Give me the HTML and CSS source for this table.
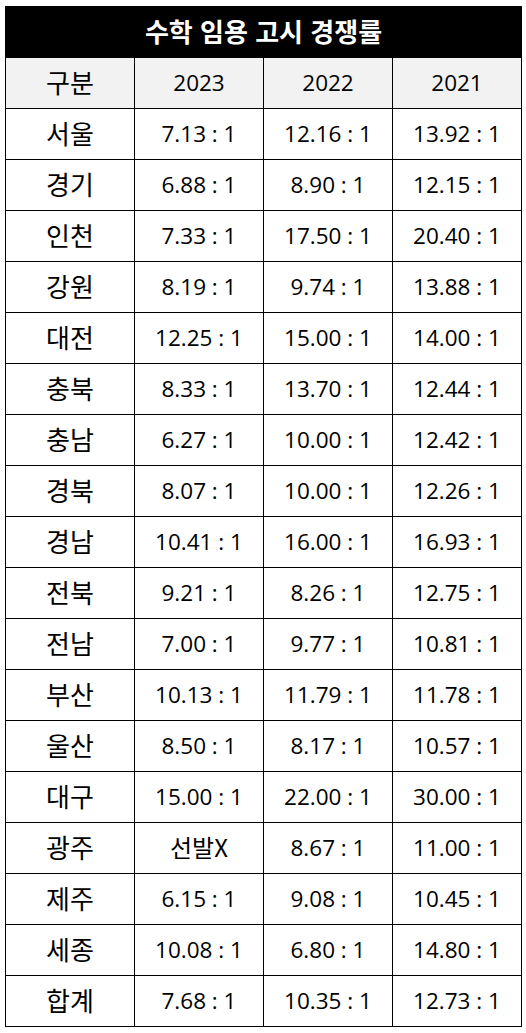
FILE: index.html
```html
<!DOCTYPE html>
<html lang="ko">
<head>
<meta charset="utf-8">
<link rel="stylesheet" href="styles.css">
</head>
<body>
<table class="rates">
  <thead>
    <tr class="title"><th colspan="4">수학 임용 고시 경쟁률</th></tr>
    <tr class="head"><th class="ko">구분</th><th>2023</th><th>2022</th><th>2021</th></tr>
  </thead>
  <tbody>
    <tr><td class="ko">서울</td><td>7.13 : 1</td><td>12.16 : 1</td><td>13.92 : 1</td></tr>
    <tr><td class="ko">경기</td><td>6.88 : 1</td><td>8.90 : 1</td><td>12.15 : 1</td></tr>
    <tr><td class="ko">인천</td><td>7.33 : 1</td><td>17.50 : 1</td><td>20.40 : 1</td></tr>
    <tr><td class="ko">강원</td><td>8.19 : 1</td><td>9.74 : 1</td><td>13.88 : 1</td></tr>
    <tr><td class="ko">대전</td><td>12.25 : 1</td><td>15.00 : 1</td><td>14.00 : 1</td></tr>
    <tr><td class="ko">충북</td><td>8.33 : 1</td><td>13.70 : 1</td><td>12.44 : 1</td></tr>
    <tr><td class="ko">충남</td><td>6.27 : 1</td><td>10.00 : 1</td><td>12.42 : 1</td></tr>
    <tr><td class="ko">경북</td><td>8.07 : 1</td><td>10.00 : 1</td><td>12.26 : 1</td></tr>
    <tr><td class="ko">경남</td><td>10.41 : 1</td><td>16.00 : 1</td><td>16.93 : 1</td></tr>
    <tr><td class="ko">전북</td><td>9.21 : 1</td><td>8.26 : 1</td><td>12.75 : 1</td></tr>
    <tr><td class="ko">전남</td><td>7.00 : 1</td><td>9.77 : 1</td><td>10.81 : 1</td></tr>
    <tr><td class="ko">부산</td><td>10.13 : 1</td><td>11.79 : 1</td><td>11.78 : 1</td></tr>
    <tr><td class="ko">울산</td><td>8.50 : 1</td><td>8.17 : 1</td><td>10.57 : 1</td></tr>
    <tr><td class="ko">대구</td><td>15.00 : 1</td><td>22.00 : 1</td><td>30.00 : 1</td></tr>
    <tr><td class="ko">광주</td><td class="mixed">선발X</td><td>8.67 : 1</td><td>11.00 : 1</td></tr>
    <tr><td class="ko">제주</td><td>6.15 : 1</td><td>9.08 : 1</td><td>10.45 : 1</td></tr>
    <tr><td class="ko">세종</td><td>10.08 : 1</td><td>6.80 : 1</td><td>14.80 : 1</td></tr>
    <tr><td class="ko">합계</td><td>7.68 : 1</td><td>10.35 : 1</td><td>12.73 : 1</td></tr>
  </tbody>
</table>
</body>
</html>
```
FILE: styles.css
```css
html, body {
  margin: 0;
  padding: 0;
  background: #ffffff;
}
body {
  padding: 6px 0 0 5px;
  font-family: "Open Sans", "Noto Sans CJK KR", sans-serif;
  color: #000;
}
.rates {
  border-collapse: collapse;
  table-layout: fixed;
  width: 517px;
}
.rates th,
.rates td {
  border: 1px solid #000;
  height: 51px;
  padding: 0;
  text-align: center;
  vertical-align: middle;
  font-size: 22.5px;
  font-weight: 400;
  line-height: 1;
  box-sizing: border-box;
}
.rates .ko {
  font-family: "Noto Sans CJK KR", sans-serif;
  font-size: 26px;
  padding-bottom: 2px;
}
.rates .mixed {
  font-family: "Noto Sans CJK KR", sans-serif;
  font-size: 24px;
  padding-bottom: 2px;
}
.rates .title th {
  background: #000;
  color: #fff;
  font-weight: 700;
  font-size: 26px;
  font-family: "Noto Sans CJK KR", sans-serif;
  padding-bottom: 2px;
}
.rates .head th {
  background: #f2f2f2;
}
```
